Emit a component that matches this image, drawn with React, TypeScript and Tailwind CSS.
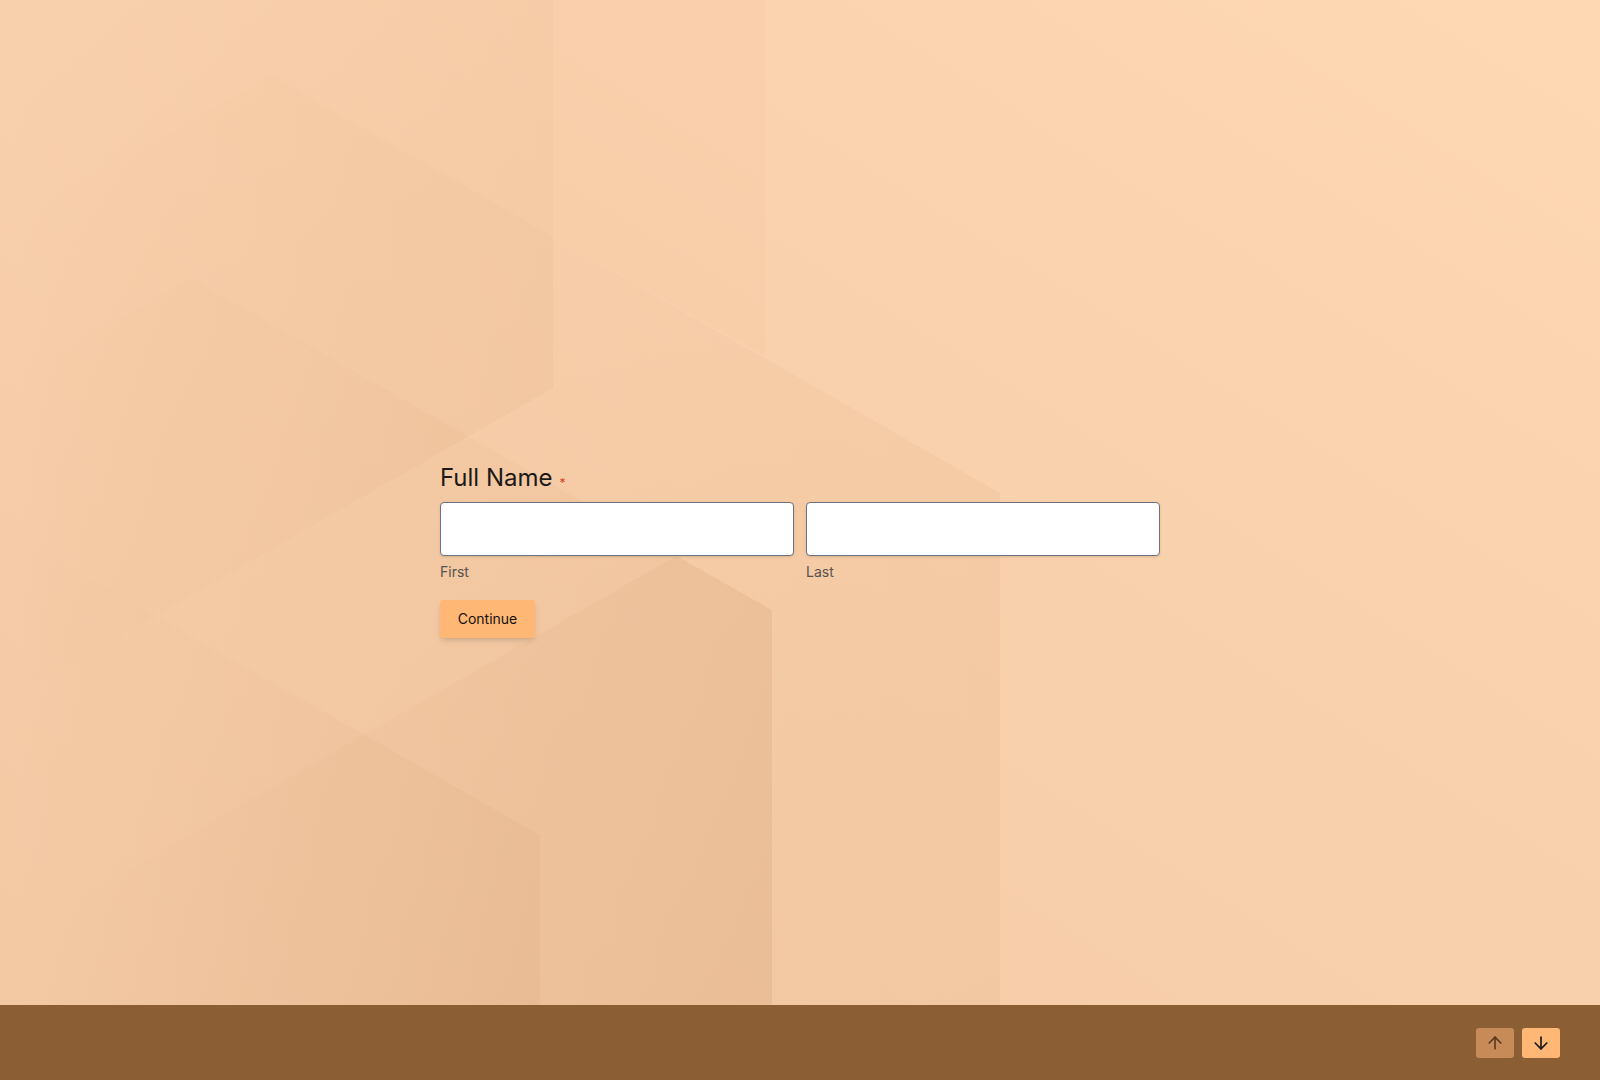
import { ArrowDown, ArrowUp } from "lucide-react";
import React from "react";

// faces of the backdrop, in page pixels (1600 x 1005 area above the footer)
const faces = [
  "0,0 553,0 553,388 0,705",
  "0,230 271,75 1000,493 1000,1005 0,1005",
  "0,387 191,278 772,610 772,1005 0,1005",
  "0,527 540,835 540,1005 0,1005",
  "0,943 676,556 772,610 772,1005 0,1005",
];

const Backdrop = () => (
  <svg
    className="absolute inset-0 w-full h-full"
    viewBox="0 0 1600 1005"
    preserveAspectRatio="none"
  >
    <defs>
      <linearGradient id="face" x1="0" y1="0" x2="1" y2="0">
        <stop offset="0" stopColor="rgb(165,100,45)" stopOpacity="0" />
        <stop offset="1" stopColor="rgb(165,100,45)" stopOpacity="0.055" />
      </linearGradient>
    </defs>
    <polygon points="553,0 765,0 765,356 553,236" fill="rgba(165,100,45,0.025)" />
    {faces.map((points, i) => (
      <polygon key={i} points={points} fill="url(#face)" />
    ))}
  </svg>
);

const App = () => {
  return (
    <div
      className="flex flex-col h-screen w-full overflow-hidden"
      style={{ fontFamily: "Inter, 'Noto Sans', sans-serif" }}
    >
      <main className="relative flex-1 flex justify-center bg-gradient-to-bl from-[#fed7b3] to-[#f3c9a4]">
        <Backdrop />
        <div className="relative w-[720px] pt-[462px]">
          <h1 className="flex items-start text-[24px] leading-8 text-[#1c1917]">
            Full Name
            <span className="ml-[7px] mt-[5px] text-[12px] text-[#dc3f2b]">*</span>
          </h1>
          <div className="mt-[3px] grid grid-cols-2 gap-3">
            <div className="flex flex-col">
              <input
                className="h-[54px] rounded-[4px] border border-[#6b7280] bg-white shadow-sm outline-none"
                aria-label="First"
              />
              <span className="mt-[6px] text-sm text-[#57534e]">First</span>
            </div>
            <div className="flex flex-col">
              <input
                className="h-[54px] rounded-[4px] border border-[#6b7280] bg-white shadow-sm outline-none"
                aria-label="Last"
              />
              <span className="mt-[6px] text-sm text-[#57534e]">Last</span>
            </div>
          </div>
          <button className="mt-[18px] h-[38px] w-[95px] rounded-[3px] bg-[#ffb775] text-sm text-[#111] shadow-md">
            Continue
          </button>
        </div>
      </main>
      <footer className="h-[75px] shrink-0 bg-[#8b5e34] flex items-center justify-end gap-2 pr-10">
        <button className="flex h-[30px] w-[38px] items-center justify-center rounded-[3px] bg-[#c68b59] text-[#5b3a1f]">
          <ArrowUp size={20} strokeWidth={2} />
        </button>
        <button className="flex h-[30px] w-[38px] items-center justify-center rounded-[3px] bg-[#ffb775] text-[#1a1a1a]">
          <ArrowDown size={20} strokeWidth={2} />
        </button>
      </footer>
    </div>
  );
};

export default App;
